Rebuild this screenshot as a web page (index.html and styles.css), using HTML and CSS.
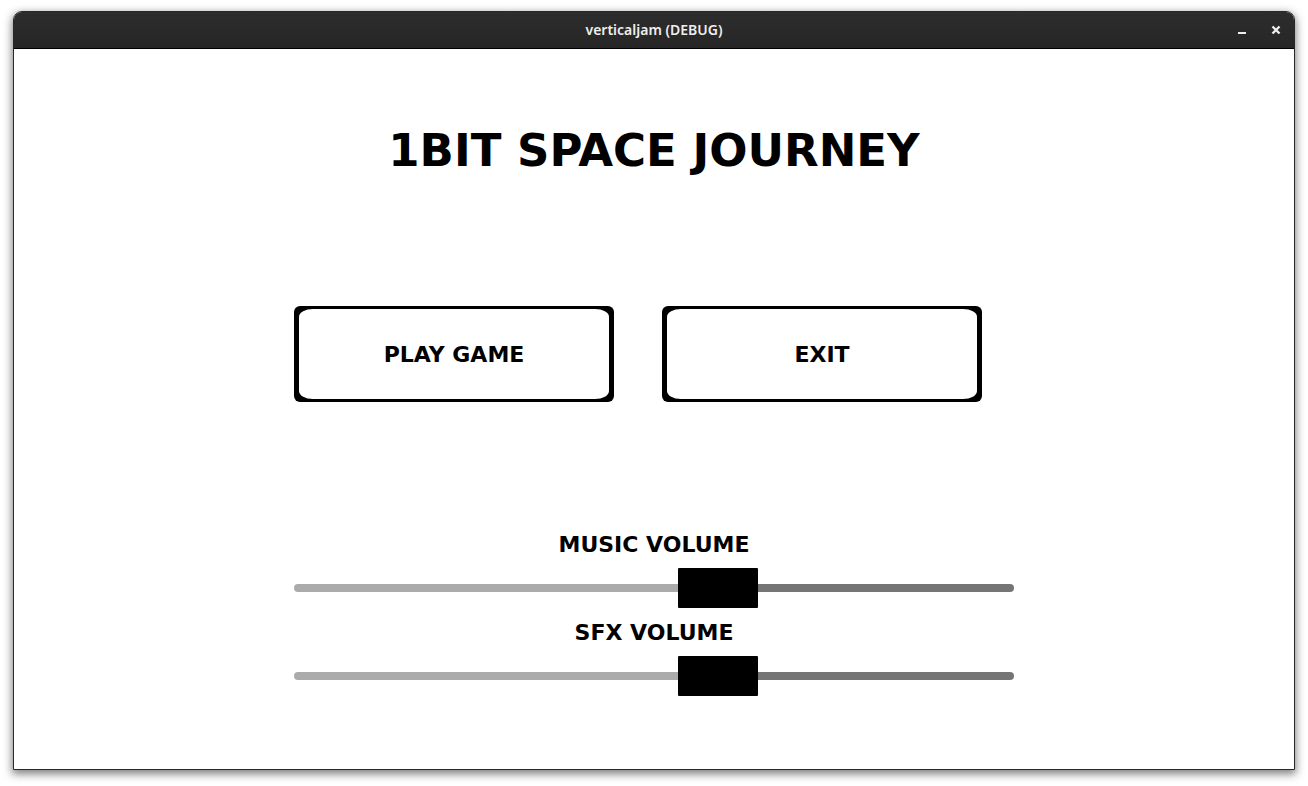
FILE: index.html
```html
<!DOCTYPE html>
<html lang="en">
<head>
<meta charset="UTF-8">
<meta name="viewport" content="width=device-width, initial-scale=1.0">
<title>verticaljam (DEBUG)</title>
<link rel="stylesheet" href="styles.css">
</head>
<body>

<div class="window">
    <header class="title-bar">
        <span class="title">verticaljam (DEBUG)</span>
        <div class="window-controls">
            <button class="control" type="button" aria-label="Minimize">
                <svg width="16" height="16" viewBox="0 0 16 16"><path d="M4 10h8v2H4z" fill="#eeeeec"/></svg>
            </button>
            <button class="control" type="button" aria-label="Close">
                <svg width="16" height="16" viewBox="0 0 16 16"><path d="M4.5 4.5l7 7M11.5 4.5l-7 7" stroke="#eeeeec" stroke-width="2.4"/></svg>
            </button>
        </div>
    </header>

    <main class="menu">
        <h1>1BIT SPACE JOURNEY</h1>

        <div class="buttons">
            <button class="btn" type="button"><span class="btn-face">PLAY GAME</span></button>
            <button class="btn" type="button"><span class="btn-face">EXIT</span></button>
        </div>

        <div class="volume">
            <label for="music-volume">MUSIC VOLUME</label>
            <input type="range" id="music-volume" min="0" max="100" value="60">
            <label for="sfx-volume">SFX VOLUME</label>
            <input type="range" id="sfx-volume" min="0" max="100" value="60">
        </div>
    </main>
</div>

</body>
</html>
```
FILE: styles.css
```css
* {
    box-sizing: border-box;
}
body {
    margin: 0;
    padding: 11px 13px 16px;
    min-height: 100vh;
    display: flex;
    background-color: #fff;
    color: #000;
    font-family: "DejaVu Sans", sans-serif;
}

/* Window frame */
.window {
    flex: 1;
    display: flex;
    flex-direction: column;
    background-color: #fff;
    border: 1px solid #282828;
    border-radius: 9px 9px 0 0;
    box-shadow: 0 3px 9px 1px rgba(0, 0, 0, 0.5);
    overflow: hidden;
}
.title-bar {
    display: grid;
    grid-template-columns: 1fr auto 1fr;
    align-items: center;
    height: 37px;
    padding: 0 10px;
    background: linear-gradient(#2d2d2d, #262626);
    border-bottom: 1px solid #000;
}
.title {
    grid-column: 2;
    padding-bottom: 2px;
    color: #eeeeec;
    font-family: "Noto Sans", sans-serif;
    font-size: 14px;
    font-weight: 600;
}
.window-controls {
    display: flex;
    justify-content: flex-end;
    gap: 18px;
}
.control {
    display: flex;
    padding: 0;
    border: 0;
    background: none;
}

/* Main menu */
.menu {
    flex: 1;
    width: 100%;
    max-width: 720px;
    margin: 0 auto;
    padding: 73px 0;
}
h1 {
    margin: 0 0 126px;
    font-size: 45px;
    line-height: 58px;
    font-weight: bold;
    text-align: center;
    white-space: nowrap;
}
.buttons {
    display: flex;
    gap: 48px;
}
.btn {
    display: flex;
    width: 320px;
    height: 96px;
    padding: 3px 5px;
    border: 0;
    border-radius: 6px;
    background-color: #000;
    color: #000;
    font-family: inherit;
    font-size: 22px;
    font-weight: bold;
}
.btn-face {
    flex: 1;
    display: flex;
    align-items: center;
    justify-content: center;
    align-self: stretch;
    border-radius: 14px / 8px;
    background-color: #fff;
}

/* Volume sliders */
.volume {
    display: flex;
    flex-direction: column;
    margin-top: 118px;
}
.volume label {
    padding-top: 2px;
    font-size: 22px;
    font-weight: bold;
    line-height: 46px;
    text-align: center;
}
.volume input {
    appearance: none;
    -webkit-appearance: none;
    width: 100%;
    height: 40px;
    margin: 0;
    background: none;
}
.volume input::-webkit-slider-runnable-track {
    height: 8px;
    border-radius: 4px;
    background: linear-gradient(to right, #ababab 60%, #757575 60%);
}
.volume input::-webkit-slider-thumb {
    -webkit-appearance: none;
    width: 80px;
    height: 40px;
    margin-top: -16px;
    border-radius: 1px;
    background-color: #000;
}
```
